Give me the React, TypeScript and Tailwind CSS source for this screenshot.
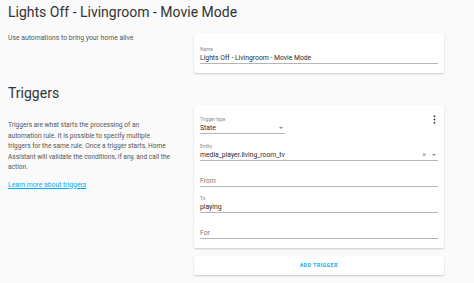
import React from "react";

const font = "font-['Roboto','Liberation_Sans',sans-serif]";

function Field({
  label,
  value,
  placeholder,
  width,
  trailing,
}: {
  label?: string;
  value?: string;
  placeholder?: string;
  width?: string;
  trailing?: React.ReactNode;
}) {
  return (
    <div className={`flex flex-col border-b border-[#b5b5b5] ${width ?? "w-full"}`}>
      <div className="h-[6px] text-[4.8px] leading-[6px] text-[#8a8a8a]">{label ?? ""}</div>
      <div className="flex h-[10px] items-center">
        <span
          className={`flex-1 text-[6.8px] leading-[10px] ${value ? "text-[#2a2a2a]" : "text-[#7a7a7a]"}`}
        >
          {value ?? placeholder}
        </span>
        {trailing}
      </div>
    </div>
  );
}

function Caret() {
  return (
    <svg width="4" height="2" viewBox="0 0 10 5" className="mr-[2px]">
      <path d="M0 0 L5 5 L10 0 Z" fill="#8a8a8a" />
    </svg>
  );
}

export default function App() {
  return (
    <div className={`w-[474px] h-[283px] overflow-hidden bg-[#fafafa] ${font}`}>
      {/* Заголовок */}
      <h1 className="mt-[2px] pl-2 text-[14px] leading-[20px] font-normal text-[#333]">
        Lights Off - Livingroom - Movie Mode
      </h1>

      {/* Имя автоматизации */}
      <div className="mt-[11px] flex">
        <div className="w-[186px] pl-2 text-[6.8px] leading-[10px] text-[#555]">
          Use automations to bring your home alive
        </div>
        <div className="ml-2 w-[250px] rounded-[2px] bg-white px-[6px] pt-[14px] pb-[9px] shadow-[0_1px_2px_rgba(0,0,0,0.2)]">
          <Field label="Name" value="Lights Off - Livingroom - Movie Mode" />
        </div>
      </div>

      {/* Триггеры */}
      <h2 className="mt-[10px] pl-2 text-[14px] leading-[20px] font-normal text-[#333]">
        Triggers
      </h2>

      <div className="mt-[2px] flex">
        <div className="w-[186px] pl-2 pt-[15px] text-[6.6px] leading-[10.5px] text-[#555]">
          <p className="whitespace-nowrap">
            Triggers are what starts the processing of an
            <br />
            automation rule. It is possible to specify multiple
            <br />
            triggers for the same rule. Once a trigger starts, Home
            <br />
            Assistant will validate the conditions, if any, and call the
            <br />
            action.
          </p>
          <a className="mt-[7px] block text-[6.8px] text-[#03a9f4] underline">
            Learn more about triggers
          </a>
        </div>

        <div className="ml-2 flex w-[250px] flex-col gap-[8px]">
          <div className="relative flex flex-col gap-[9px] rounded-[2px] bg-white px-[6px] pt-[12px] pb-[9px] shadow-[0_1px_2px_rgba(0,0,0,0.2)]">
            <svg
              width="3"
              height="9"
              viewBox="0 0 3 9"
              className="absolute right-[8px] top-[10px]"
            >
              <circle cx="1.5" cy="1.2" r="0.9" fill="#333" />
              <circle cx="1.5" cy="4.5" r="0.9" fill="#333" />
              <circle cx="1.5" cy="7.8" r="0.9" fill="#333" />
            </svg>
            <Field label="Trigger type" value="State" width="w-[85px]" trailing={<Caret />} />
            <div className="mt-[1px]">
              <Field
                label="Entity"
                value="media_player.living_room_tv"
                trailing={
                  <div className="flex items-center gap-[6px]">
                    <span className="text-[7px] leading-[10px] text-[#8a8a8a]">×</span>
                    <Caret />
                  </div>
                }
              />
            </div>
            <Field placeholder="From" />
            <Field label="To" value="playing" />
            <Field placeholder="For" />
          </div>

          <div className="flex h-[19px] items-center justify-center rounded-[2px] bg-white shadow-[0_1px_2px_rgba(0,0,0,0.2)]">
            <span className="text-[5px] font-bold tracking-[0.6px] text-[#03a9f4]">ADD TRIGGER</span>
          </div>
        </div>
      </div>
    </div>
  );
}
